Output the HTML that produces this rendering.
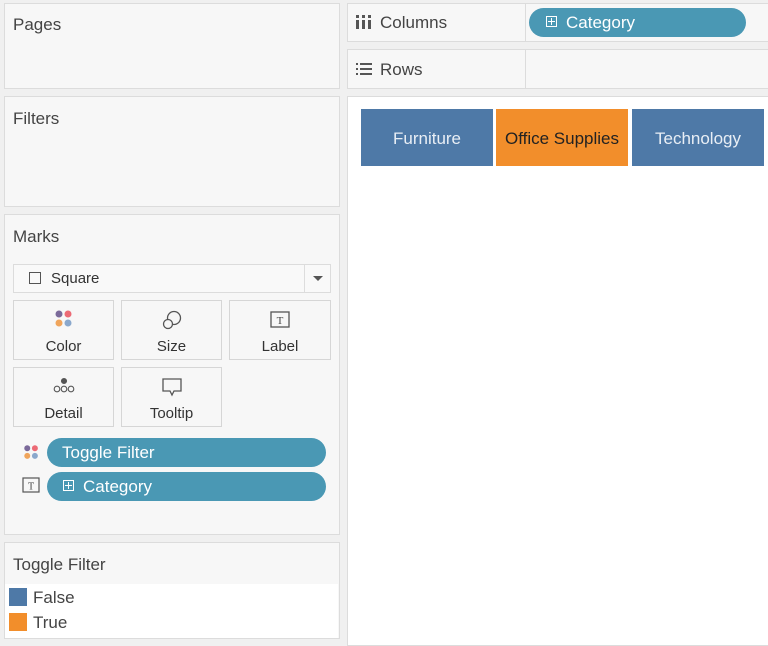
<!DOCTYPE html><html><head><style>
body{margin:0;width:768px;height:641px;background:#f0f0f0;font-family:"Liberation Sans",sans-serif;position:relative;overflow:hidden;color:#333}
.p{position:absolute;background:#f7f7f7;border:1px solid #dcdcdc;box-sizing:border-box}
.t{position:absolute;font-size:17px;color:#444}
.btn{position:absolute;background:#f7f7f7;border:1px solid #d6d6d6;box-sizing:border-box;text-align:center;font-size:15px;color:#333}
.btn span{position:absolute;left:0;right:0;bottom:4px}
.btn svg{position:absolute;left:50%;top:8px;transform:translateX(-50%)}
.pill{position:absolute;background:#4a98b4;color:#fff;border-radius:15px;font-size:17px;box-sizing:border-box}
.tile{position:absolute;top:109px;height:57px;font-size:17px;display:flex;align-items:center;justify-content:center;padding-top:3px;box-sizing:border-box}
</style></head><body>
<div class="p" style="left:4px;top:3px;width:336px;height:86px"></div><div class="t" style="left:13px;top:15px">Pages</div>
<div class="p" style="left:4px;top:96px;width:336px;height:111px"></div><div class="t" style="left:13px;top:109px">Filters</div>
<div class="p" style="left:4px;top:214px;width:336px;height:321px"></div><div class="t" style="left:13px;top:227px">Marks</div>
<div class="p" style="left:13px;top:264px;width:318px;height:29px;background:#f9f9f9"></div>
<div style="position:absolute;left:29px;top:272px;width:12px;height:12px;border:1.5px solid #555;box-sizing:border-box"></div>
<div style="position:absolute;left:51px;top:270px;font-size:15px">Square</div>
<div style="position:absolute;left:304px;top:265px;width:1px;height:27px;background:#ddd"></div>
<div style="position:absolute;left:313px;top:276px;border-left:5px solid transparent;border-right:5px solid transparent;border-top:5px solid #555"></div>
<div class="btn" style="left:13px;top:300px;width:101px;height:60px"><svg width="20" height="20" viewBox="0 0 20 20"><circle cx="5" cy="5" r="3.5" fill="#7b6a9a"/><circle cx="14" cy="5" r="3.5" fill="#ec6a75"/><circle cx="5" cy="14" r="3.5" fill="#f0a55c"/><circle cx="14" cy="14" r="3.5" fill="#8aa8cc"/></svg><span>Color</span></div>
<div class="btn" style="left:121px;top:300px;width:101px;height:60px"><svg width="22" height="22" viewBox="0 0 22 22" fill="none" stroke="#555" stroke-width="1.3"><circle cx="13" cy="9" r="6.5"/><circle cx="7" cy="15" r="4.5" fill="#f7f7f7"/></svg><span>Size</span></div>
<div class="btn" style="left:229px;top:300px;width:102px;height:60px"><svg width="22" height="22" viewBox="0 0 22 22"><rect x="2" y="3" width="18" height="15" fill="none" stroke="#555" stroke-width="1.3"/><text x="11" y="15" font-size="11" text-anchor="middle" fill="#444" font-family="Liberation Serif">T</text></svg><span>Label</span></div>
<div class="btn" style="left:13px;top:367px;width:101px;height:60px"><svg width="24" height="20" viewBox="0 0 24 20" fill="none" stroke="#555" stroke-width="1.1"><circle cx="12" cy="5" r="2.5" fill="#555"/><circle cx="5" cy="13" r="2.8"/><circle cx="12" cy="13" r="2.8"/><circle cx="19" cy="13" r="2.8"/></svg><span>Detail</span></div>
<div class="btn" style="left:121px;top:367px;width:101px;height:60px"><svg width="24" height="22" viewBox="0 0 24 22" fill="none" stroke="#555" stroke-width="1.3"><path d="M3 3H21V15H14L12 19L10 15H3Z"/></svg><span>Tooltip</span></div>
<svg style="position:absolute;left:23px;top:444px" width="17" height="17" viewBox="0 0 20 20"><circle cx="5" cy="5" r="3.5" fill="#7b6a9a"/><circle cx="14" cy="5" r="3.5" fill="#ec6a75"/><circle cx="5" cy="14" r="3.5" fill="#f0a55c"/><circle cx="14" cy="14" r="3.5" fill="#8aa8cc"/></svg>
<div class="pill" style="left:47px;top:438px;width:279px;height:29px;padding:5px 0 0 15px">Toggle Filter</div>
<svg style="position:absolute;left:22px;top:477px" width="18" height="17" viewBox="0 0 18 17"><rect x="1" y="1" width="16" height="14" fill="none" stroke="#555" stroke-width="1.2"/><text x="9" y="12.5" font-size="10" text-anchor="middle" fill="#444" font-family="Liberation Serif">T</text></svg>
<div class="pill" style="left:47px;top:472px;width:279px;height:29px;padding:5px 0 0 36px">Category</div>
<div style="position:absolute;left:63px;top:480px;width:11px;height:11px;border:1px solid #fff;box-sizing:border-box"></div><div style="position:absolute;left:65px;top:485px;width:7px;height:1px;background:#fff"></div><div style="position:absolute;left:68px;top:482px;width:1px;height:7px;background:#fff"></div>
<div class="p" style="left:4px;top:542px;width:336px;height:97px"></div>
<div style="position:absolute;left:5px;top:584px;width:333px;height:54px;background:#fff"></div>
<div class="t" style="left:13px;top:555px">Toggle Filter</div>
<div style="position:absolute;left:9px;top:588px;width:18px;height:18px;background:#4e79a7"></div><div class="t" style="left:33px;top:588px">False</div>
<div style="position:absolute;left:9px;top:613px;width:18px;height:18px;background:#f28e2b"></div><div class="t" style="left:33px;top:613px">True</div>
<div class="p" style="left:347px;top:3px;width:425px;height:39px"></div>
<div style="position:absolute;left:525px;top:4px;width:1px;height:37px;background:#dcdcdc"></div>
<svg style="position:absolute;left:356px;top:15px" width="15" height="14" viewBox="0 0 15 14" fill="#555"><rect x="0" y="0" width="3" height="3"/><rect x="0" y="5" width="3" height="9"/><rect x="6" y="0" width="3" height="3"/><rect x="6" y="5" width="3" height="9"/><rect x="12" y="0" width="3" height="3"/><rect x="12" y="5" width="3" height="9"/></svg>
<div class="t" style="left:380px;top:13px">Columns</div>
<div class="pill" style="left:529px;top:8px;width:217px;height:29px;padding:5px 0 0 37px">Category</div>
<div style="position:absolute;left:546px;top:16px;width:11px;height:11px;border:1px solid #fff;box-sizing:border-box"></div><div style="position:absolute;left:548px;top:21px;width:7px;height:1px;background:#fff"></div><div style="position:absolute;left:551px;top:18px;width:1px;height:7px;background:#fff"></div>
<div class="p" style="left:347px;top:49px;width:425px;height:40px"></div>
<div style="position:absolute;left:525px;top:50px;width:1px;height:38px;background:#dcdcdc"></div>
<svg style="position:absolute;left:356px;top:63px" width="16" height="12" viewBox="0 0 16 12" fill="#555"><rect x="0" y="0" width="2" height="2"/><rect x="4" y="0" width="12" height="2"/><rect x="0" y="5" width="2" height="2"/><rect x="4" y="5" width="12" height="2"/><rect x="0" y="10" width="2" height="2"/><rect x="4" y="10" width="12" height="2"/></svg>
<div class="t" style="left:380px;top:60px">Rows</div>
<div class="p" style="left:347px;top:96px;width:425px;height:550px;background:#fff"></div>
<div class="tile" style="left:361px;width:132px;background:#4e79a7;color:#e8eef5">Furniture</div>
<div class="tile" style="left:496px;width:132px;background:#f28e2b;color:#222">Office Supplies</div>
<div class="tile" style="left:632px;width:132px;background:#4e79a7;color:#e8eef5">Technology</div>
</body></html>
